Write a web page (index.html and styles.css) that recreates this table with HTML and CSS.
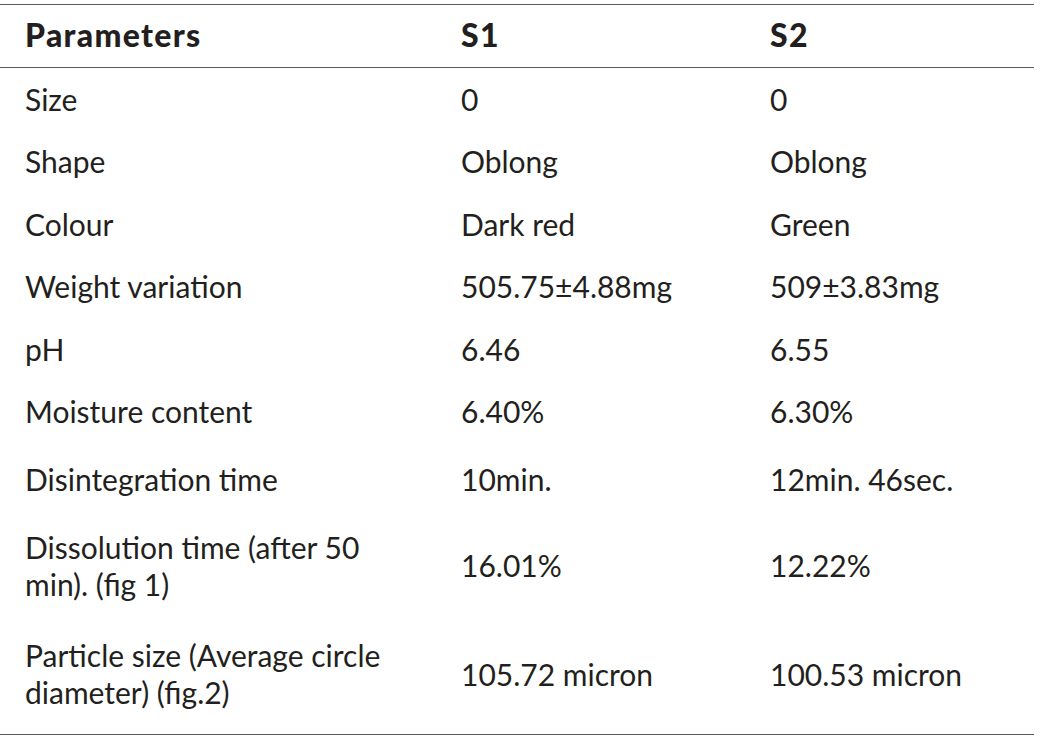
FILE: index.html
```html
<!DOCTYPE html>
<html lang="en">
<head>
<meta charset="utf-8">
<title>Parameters</title>
<link rel="stylesheet" href="styles.css">
</head>
<body>
<table class="params">
  <thead>
    <tr class="head-row">
      <th class="col-param">Parameters</th>
      <th class="col-s1">S1</th>
      <th class="col-s2">S2</th>
    </tr>
  </thead>
  <tbody>
    <tr class="row r-a"><td>Size</td><td>0</td><td>0</td></tr>
    <tr class="row r-b"><td>Shape</td><td>Oblong</td><td>Oblong</td></tr>
    <tr class="row r-a"><td>Colour</td><td>Dark red</td><td>Green</td></tr>
    <tr class="row r-b"><td>Weight variation</td><td>505.75±4.88mg</td><td>509±3.83mg</td></tr>
    <tr class="row r-a"><td>pH</td><td>6.46</td><td>6.55</td></tr>
    <tr class="row r-b"><td>Moisture content</td><td>6.40%</td><td>6.30%</td></tr>
    <tr class="row r-tall"><td>Disintegration time</td><td>10min.</td><td>12min. 46sec.</td></tr>
    <tr class="row r-two"><td>Dissolution time (after 50<br>min). (fig 1)</td><td>16.01%</td><td>12.22%</td></tr>
    <tr class="row r-last"><td>Particle size (Average circle<br>diameter) (fig.2)</td><td>105.72 micron</td><td>100.53 micron</td></tr>
  </tbody>
</table>
</body>
</html>
```
FILE: styles.css
```css
html, body {
  margin: 0;
  padding: 0;
  background: #ffffff;
}

body {
  padding-top: 4px;
  font-family: "Lato", "Open Sans", "DejaVu Sans", sans-serif;
  color: #231f20;
}

.params {
  width: 1034px;
  border-collapse: collapse;
  border-spacing: 0;
  border-top: 1px solid #5a5a5a;
  border-bottom: 1px solid #5a5a5a;
  font-size: 30px;
  line-height: 37px;
}

.params th,
.params td {
  padding: 0 0 0 25px;
  text-align: left;
  vertical-align: middle;
}

.col-param { width: 411px; }
.col-s1 { width: 284px; }

.head-row {
  height: 63px;
  border-bottom: 1px solid #5a5a5a;
}

.head-row th {
  font-weight: 900;
  font-size: 32px;
  letter-spacing: 1.3px;
  padding-bottom: 3px;
}

.r-a { height: 63px; }
.r-b { height: 62px; }
.r-tall { height: 74px; }
.r-two { height: 98px; }
.r-last { height: 120px; }
```
